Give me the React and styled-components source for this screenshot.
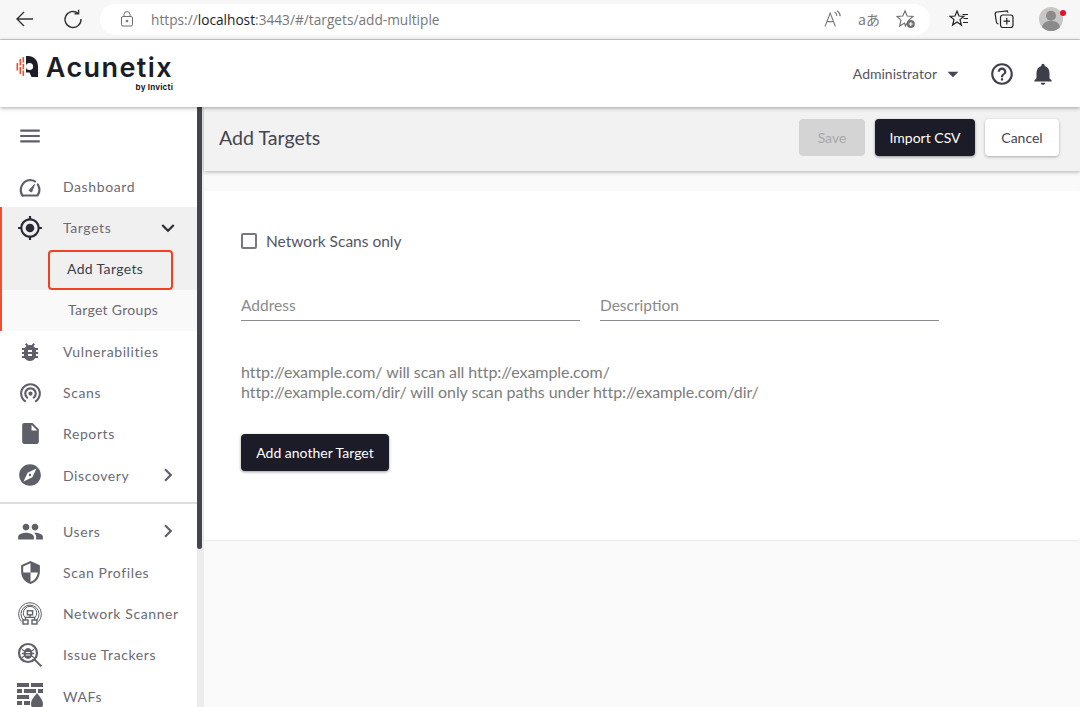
import styled, { createGlobalStyle } from "styled-components";
import {
  MdArrowDropDown,
  MdBugReport,
  MdExplore,
  MdGpsFixed,
  MdHelpOutline,
  MdInsertDriveFile,
  MdKeyboardArrowDown,
  MdKeyboardArrowRight,
  MdMenu,
  MdNotifications,
  MdPeople,
  MdSecurity,
  MdWifiTethering,
} from "react-icons/md";

const GlobalStyle = createGlobalStyle`
  html, body { margin: 0; padding: 0; height: 100%; }
  body { font-family: "Lato", "Noto Sans", sans-serif; background: #fff; overflow: hidden; }
  * { box-sizing: border-box; }
`;

const SpeedIcon = () => (
  <svg width="24" height="24" viewBox="0 0 24 24" fill="none" stroke="#5f5f69" strokeWidth="2.2">
    <path d="M4.5 20.5 A10 10 0 0 1 12 5 c2 0 3.6.5 5 1.4" strokeLinecap="round" />
    <path d="M19.8 9.5 A10 10 0 0 1 19.5 20.5 H4.5" strokeLinecap="round" />
    <path d="M11 15.5 L16.5 9.5 L13.6 17 Z" fill="#5f5f69" strokeWidth="1" />
  </svg>
);

const NetworkScannerIcon = () => (
  <svg width="24" height="24" viewBox="0 0 24 24" fill="none" stroke="#5f5f69">
    <path d="M3.4 19.6 A11.4 11.4 0 1 1 20.6 19.6" strokeWidth="1" />
    <path d="M5.2 18 A9 9 0 1 1 18.8 18" strokeWidth="1" />
    <path d="M7 15.5 A6.7 6.7 0 1 1 17 15.5" strokeWidth="1" />
    <rect x="9.4" y="8.8" width="5.2" height="4" fill="#fff" strokeWidth="1.4" />
    <rect x="5" y="18" width="5" height="4" fill="#fff" strokeWidth="1.4" />
    <rect x="14" y="18" width="5" height="4" fill="#fff" strokeWidth="1.4" />
    <path d="M12 12.8 V15.4 M7.5 18 V15.4 H16.5 V18" strokeWidth="1.4" />
  </svg>
);

const IssueTrackerIcon = () => (
  <svg width="26" height="26" viewBox="0 0 26 26" fill="none" stroke="#5f5f69">
    <circle cx="11" cy="11" r="9" strokeWidth="2.2" />
    <path d="M17.6 17.6 L24.4 24.4" strokeWidth="2" />
    <ellipse cx="11" cy="11.5" rx="4.4" ry="5.4" fill="#5f5f69" strokeWidth="0" />
    <path d="M5 7.5 L7.5 9 M17 7.5 L14.5 9 M4.8 11.5 H7 M17.2 11.5 H15 M5 15.5 L7.5 14 M17 15.5 L14.5 14" strokeWidth="1.3" />
    <path d="M8.8 10.5 H13.2 M8.8 13 H13.2" stroke="#fff" strokeWidth="1" />
  </svg>
);

const WafIcon = () => (
  <svg width="28" height="28" viewBox="0 0 28 28" fill="#5f5f69">
    <rect x="1" y="1" width="12" height="4" />
    <rect x="15" y="1" width="12" height="4" />
    <rect x="1" y="7" width="5" height="4" />
    <rect x="8" y="7" width="12" height="4" />
    <rect x="22" y="7" width="5" height="4" />
    <rect x="1" y="13" width="12" height="4" />
    <rect x="1" y="19" width="5" height="4" />
    <rect x="8" y="19" width="6" height="4" />
    <path d="M21 11 c3 4 6 7 6 11 a6 6 0 0 1-12 0 c0-4 3-7 6-11z" />
  </svg>
);

const BackIcon = () => (
  <svg width="20" height="20" viewBox="0 0 20 20" fill="none" stroke="#333" strokeWidth="1.4">
    <path d="M18 10 H2 M9 3 L2 10 L9 17" />
  </svg>
);

const ReloadIcon = () => (
  <svg width="20" height="20" viewBox="0 0 20 20" fill="none" stroke="#333" strokeWidth="1.4">
    <path d="M15 4.2 A8 8 0 1 0 18 10" />
    <path d="M15.6 .8 V4.8 H11.6" />
  </svg>
);

const LockIcon = () => (
  <svg width="14" height="16" viewBox="0 0 14 16" fill="none" stroke="#6f6f6f" strokeWidth="1">
    <rect x="1.5" y="5.5" width="11" height="9.5" rx="1.5" />
    <path d="M4 5.5 V3.6 a3 3 0 0 1 6 0 V5.5" />
    <circle cx="7" cy="10" r=".9" fill="#6f6f6f" />
  </svg>
);

const ReadAloudIcon = () => (
  <svg width="18" height="18" viewBox="0 0 18 18" fill="none" stroke="#7b7b7b" strokeWidth="1.1">
    <path d="M1 16.5 L6.2 3 L11.4 16.5 M3 11.6 H9.4" />
    <path d="M10.5 2 c1.6.8 2.4 2.2 2.4 4 M13 .8 c2 1.2 3.2 3 3.2 5.4" />
  </svg>
);

const StarAddIcon = () => (
  <svg width="20" height="20" viewBox="0 0 20 20" fill="none" stroke="#6f6f6f" strokeWidth="1.1">
    <path d="M9 1.8 L11.2 7 L17 7.4 L12.8 11 L9.4 17 L8.6 14 L3.6 17 L5 11.2 L1 7.4 L6.8 7 Z" />
    <circle cx="14.8" cy="15" r="4" fill="#6f6f6f" stroke="none" />
    <path d="M14.8 13 V17 M12.8 15 H16.8" stroke="#fff" />
  </svg>
);

const FavoritesIcon = () => (
  <svg width="20" height="20" viewBox="0 0 20 20" fill="none" stroke="#222" strokeWidth="1.2">
    <path d="M8 2 L10 7 L15 7.3 L11 10.6 L12.4 16 L8 13 L3.6 16 L5 10.6 L1 7.3 L6 7 Z" />
    <path d="M13.6 5.5 H19 M14.6 9.5 H19 M14 13.5 H19" />
  </svg>
);

const CollectionsIcon = () => (
  <svg width="20" height="20" viewBox="0 0 20 20" fill="none" stroke="#222" strokeWidth="1.2">
    <rect x="6.5" y="6" width="12.5" height="12.5" rx="2.5" />
    <path d="M14 3.6 L13.4 2 L3 3 C1.8 3.2 1 4.2 1.2 5.4 L2.4 13 C2.6 14 3.4 14.8 4.4 15" />
    <path d="M12.8 9 V15.5 M9.5 12.2 H16" />
  </svg>
);

const ProfileIcon = () => (
  <svg width="24" height="24" viewBox="0 0 24 24">
    <circle cx="12" cy="12" r="12" fill="#c9c7c5" />
    <circle cx="12" cy="8.8" r="5" fill="#8b8b8b" />
    <path d="M3 20 c1-5 5-6 9-6 s8 1 9 6 a12 12 0 0 1-18 0z" fill="#8b8b8b" />
  </svg>
);

const LogoMark = () => (
  <svg width="23" height="22" viewBox="0 0 23 22">
    <g fill="#f1502f">
      <rect x="0.5" y="7" width="1.6" height="7.5" />
      <rect x="3.5" y="3" width="1.6" height="6.5" />
      <rect x="3.5" y="11" width="1.6" height="7" />
      <rect x="6.5" y="1" width="1.6" height="5.5" />
      <rect x="6.5" y="8" width="1.6" height="5" />
      <rect x="6.5" y="14.5" width="1.6" height="5.5" />
    </g>
    <path d="M10 0 H12 C18 0 22 4.5 22 10.5 V21 H15.5 L13.5 16.5 H10 Z" fill="#1c1c28" />
    <circle cx="13.5" cy="10.5" r="3.6" fill="#fff" />
  </svg>
);

const navTop = [
  { label: "Vulnerabilities", icon: <MdBugReport size={24} /> },
  { label: "Scans", icon: <MdWifiTethering size={25} /> },
  { label: "Reports", icon: <MdInsertDriveFile size={25} /> },
  { label: "Discovery", icon: <MdExplore size={26} />, arrow: true },
];

const navBottom = [
  { label: "Users", icon: <MdPeople size={27} />, arrow: true },
  { label: "Scan Profiles", icon: <MdSecurity size={25} /> },
  { label: "Network Scanner", icon: <NetworkScannerIcon /> },
  { label: "Issue Trackers", icon: <IssueTrackerIcon /> },
  { label: "WAFs", icon: <WafIcon /> },
];

const NavRow = ({ item }) => (
  <NavItem>
    <NavIcon>{item.icon}</NavIcon>
    <NavLabel>{item.label}</NavLabel>
    {item.arrow && (
      <NavArrow>
        <MdKeyboardArrowRight size={26} />
      </NavArrow>
    )}
  </NavItem>
);

export default function App() {
  return (
    <>
      <GlobalStyle />
      <Page>
        <BrowserBar>
          <BackButton>
            <BackIcon />
          </BackButton>
          <BrowserButton>
            <ReloadIcon />
          </BrowserButton>
          <UrlPill>
            <LockIcon />
            <UrlText>
              https://<UrlHost>localhost</UrlHost>:3443/#/targets/add-multiple
            </UrlText>
            <UrlActions>
              <ReadAloudIcon />
              <TranslateGlyph>aあ</TranslateGlyph>
              <StarAddIcon />
            </UrlActions>
          </UrlPill>
          <BrowserTools>
            <FavoritesIcon />
            <CollectionsIcon />
            <ProfileWrap>
              <ProfileIcon />
              <ProfileDot />
            </ProfileWrap>
          </BrowserTools>
        </BrowserBar>

        <TopHeader>
          <Logo>
            <LogoRow>
              <LogoMark />
              <LogoName>Acunetix</LogoName>
            </LogoRow>
            <LogoBy>by Invicti</LogoBy>
          </Logo>
          <UserArea>
            <UserName>Administrator</UserName>
            <UserCaret>
              <MdArrowDropDown size={26} />
            </UserCaret>
            <HeaderIcon>
              <MdHelpOutline size={26} />
            </HeaderIcon>
            <HeaderIcon>
              <MdNotifications size={26} />
            </HeaderIcon>
          </UserArea>
        </TopHeader>

        <Main>
          <Sidebar>
            <MenuButton>
              <MdMenu size={26} />
            </MenuButton>
            <NavItem>
              <NavIcon>
                <SpeedIcon />
              </NavIcon>
              <NavLabel>Dashboard</NavLabel>
            </NavItem>
            <TargetsGroup>
              <ActiveBlock>
                <NavItem>
                  <NavIcon $dark>
                    <MdGpsFixed size={26} />
                  </NavIcon>
                  <NavLabel>Targets</NavLabel>
                  <NavArrow $dark>
                    <MdKeyboardArrowDown size={26} />
                  </NavArrow>
                </NavItem>
                <SubItem>
                  <HighlightBox>Add Targets</HighlightBox>
                </SubItem>
              </ActiveBlock>
              <SubItemMuted>Target Groups</SubItemMuted>
            </TargetsGroup>
            {navTop.map((item) => (
              <NavRow key={item.label} item={item} />
            ))}
            <NavDivider />
            {navBottom.map((item) => (
              <NavRow key={item.label} item={item} />
            ))}
          </Sidebar>
          <ScrollTrack>
            <ScrollThumb />
          </ScrollTrack>

          <Content>
            <PageHeader>
              <PageTitle>Add Targets</PageTitle>
              <HeaderButtons>
                <SaveButton disabled>Save</SaveButton>
                <ImportButton>Import CSV</ImportButton>
                <CancelButton>Cancel</CancelButton>
              </HeaderButtons>
            </PageHeader>
            <ContentBody>
              <Card>
                <CheckRow>
                  <CheckBox />
                  <CheckLabel>Network Scans only</CheckLabel>
                </CheckRow>
                <Fields>
                  <Field>Address</Field>
                  <Field>Description</Field>
                </Fields>
                <HelpText>
                  http://example.com/ will scan all http://example.com/
                  <br />
                  http://example.com/dir/ will only scan paths under http://example.com/dir/
                </HelpText>
                <AddButton>Add another Target</AddButton>
              </Card>
            </ContentBody>
          </Content>
        </Main>
      </Page>
    </>
  );
}

const Page = styled.div`
  height: 100vh;
  display: flex;
  flex-direction: column;
  overflow: hidden;
`;

const BrowserBar = styled.div`
  height: 40px;
  flex: none;
  display: flex;
  align-items: center;
  background: #f7f7f7;
  border-bottom: 1px solid #cfcfcf;
  padding: 0 17px 1px 0;
`;

const BrowserButton = styled.div`
  width: 46px;
  height: 32px;
  display: flex;
  align-items: center;
  justify-content: center;
`;

const BackButton = styled(BrowserButton)`
  width: 50px;
`;

const UrlPill = styled.div`
  width: 830px;
  height: 31px;
  margin-left: 4px;
  display: flex;
  align-items: center;
  padding: 0 14px 0 20px;
  background: #fff;
  border-radius: 16px;
`;

const UrlText = styled.div`
  margin-left: 17px;
  font: 13.7px "Open Sans", sans-serif;
  color: #777;
  white-space: nowrap;
`;

const UrlHost = styled.span`
  color: #222;
`;

const UrlActions = styled.div`
  margin-left: auto;
  display: flex;
  align-items: center;
  gap: 16px;
`;

const TranslateGlyph = styled.span`
  font: 14px "Noto Sans CJK JP", sans-serif;
  color: #7b7b7b;
`;

const BrowserTools = styled.div`
  margin-left: auto;
  display: flex;
  align-items: center;
  gap: 25px;
`;

const ProfileWrap = styled.div`
  position: relative;
  display: flex;
`;

const ProfileDot = styled.span`
  position: absolute;
  top: 3px;
  right: -3px;
  width: 6px;
  height: 6px;
  border-radius: 50%;
  background: #e81123;
`;

const TopHeader = styled.header`
  position: relative;
  z-index: 3;
  height: 67px;
  flex: none;
  display: flex;
  align-items: center;
  justify-content: space-between;
  padding: 0 24px 0 17px;
  background: #fff;
  box-shadow: 0 1px 4px rgba(0, 0, 0, 0.35);
`;

const Logo = styled.div`
  display: flex;
  flex-direction: column;
  align-items: flex-end;
  width: 156px;
  margin-top: -3px;
`;

const LogoRow = styled.div`
  display: flex;
  align-items: center;
  gap: 7px;
  height: 30px;
`;

const LogoName = styled.span`
  font: 600 27px "Inter", sans-serif;
  letter-spacing: 1.4px;
  color: #1c1c28;
`;

const LogoBy = styled.span`
  font: 700 8px "Inter", sans-serif;
  letter-spacing: 0.2px;
  color: #1c1c28;
`;

const UserArea = styled.div`
  display: flex;
  align-items: center;
`;

const UserName = styled.span`
  font-size: 14px;
  color: #55555f;
`;

const UserCaret = styled.span`
  display: flex;
  margin: 0 8px 0 3px;
  color: #45454f;
`;

const HeaderIcon = styled.span`
  display: flex;
  margin-left: 15px;
  color: #3e3e4a;
`;

const Main = styled.div`
  flex: 1;
  min-height: 0;
  display: flex;
`;

const Sidebar = styled.nav`
  width: 197px;
  flex: none;
  background: #fff;
  overflow: hidden;
`;

const MenuButton = styled.div`
  height: 59px;
  padding: 0 0 2px 17px;
  display: flex;
  align-items: center;
  color: #5f5f69;
`;

const NavItem = styled.div`
  height: 41.2px;
  display: flex;
  align-items: center;
  padding: 0 16px 0 16px;
`;

const NavIcon = styled.span`
  width: 28px;
  height: 28px;
  flex: none;
  display: flex;
  align-items: center;
  justify-content: center;
  color: ${(p) => (p.$dark ? "#2a2a35" : "#5f5f69")};
`;

const NavLabel = styled.span`
  margin-left: 19px;
  font-size: 14px;
  letter-spacing: 0.6px;
  color: #6b6b75;
  white-space: nowrap;
`;

const NavArrow = styled.span`
  margin-left: auto;
  display: flex;
  color: ${(p) => (p.$dark ? "#2a2a35" : "#5f5f69")};
`;

const TargetsGroup = styled.div`
  border-left: 2px solid #f1502f;
`;

const ActiveBlock = styled.div`
  background: #f0f0f0;

  ${NavItem} {
    padding-left: 14px;
    padding-right: 16px;
  }
`;

const SubItem = styled.div`
  height: 41.6px;
  padding-left: 46px;
  display: flex;
  align-items: flex-end;
`;

const HighlightBox = styled.div`
  width: 125px;
  height: 40px;
  padding: 0 0 2px 17px;
  display: flex;
  align-items: center;
  border: 2px solid #f1411f;
  border-radius: 4px;
  font-size: 14px;
  letter-spacing: 0.35px;
  color: #3e3e4a;
`;

const SubItemMuted = styled.div`
  height: 41px;
  padding: 0 0 2px 66px;
  display: flex;
  align-items: center;
  background: #f9f9f9;
  font-size: 14px;
  letter-spacing: 0.3px;
  color: #6b6b75;
`;

const NavDivider = styled.div`
  height: 2px;
  margin: 6px 0 7px;
  background: #dedede;
`;

const ScrollTrack = styled.div`
  width: 7px;
  flex: none;
  background: #ececec;
`;

const ScrollThumb = styled.div`
  width: 5px;
  height: 442px;
  background: #45454f;
  border-radius: 0 0 3px 3px;
`;

const Content = styled.main`
  flex: 1;
  min-width: 0;
  display: flex;
  flex-direction: column;
  background: #fafafa;
`;

const PageHeader = styled.div`
  position: relative;
  z-index: 2;
  height: 64px;
  flex: none;
  display: flex;
  align-items: center;
  justify-content: space-between;
  padding: 0 21px 3px 15px;
  background: #f2f2f2;
  box-shadow: 0 1px 4px rgba(0, 0, 0, 0.3);
`;

const PageTitle = styled.h1`
  margin: 0;
  font-size: 19.6px;
  font-weight: 400;
  color: #45454f;
`;

const HeaderButtons = styled.div`
  display: flex;
  gap: 10px;
`;

const BaseButton = styled.button`
  height: 37px;
  padding: 0;
  border: 0;
  border-radius: 4px;
  font-family: inherit;
  font-size: 14px;
  white-space: nowrap;
`;

const DarkButton = styled(BaseButton)`
  background: #1c1c28;
  color: #fff;
  box-shadow: 0 1px 3px rgba(0, 0, 0, 0.4);
`;

const ImportButton = styled(DarkButton)`
  width: 100px;
`;

const AddButton = styled(DarkButton)`
  width: 148px;
`;

const CancelButton = styled(BaseButton)`
  width: 74px;
  background: #fff;
  color: #45454f;
  box-shadow: 0 1px 3px rgba(0, 0, 0, 0.3);
`;

const SaveButton = styled(BaseButton)`
  width: 66px;
  background: #d4d4d4;
  color: #a8a8a8;
`;

const ContentBody = styled.div`
  flex: 1;
  padding-top: 20px;
`;

const Card = styled.section`
  height: 349px;
  padding: 42px 37px 0;
  background: #fff;
  box-shadow: 0 1px 2px rgba(0, 0, 0, 0.07);
  border-radius: 2px;
`;

const CheckRow = styled.div`
  display: flex;
  align-items: center;
  height: 16px;
  gap: 9px;
`;

const CheckBox = styled.span`
  width: 16px;
  height: 16px;
  border: 2px solid #77777f;
  border-radius: 2px;
`;

const CheckLabel = styled.span`
  font-size: 15.5px;
  color: #55555f;
`;

const Fields = styled.div`
  display: flex;
  gap: 20px;
  margin-top: 38px;
`;

const Field = styled.div`
  width: 339px;
  height: 34px;
  padding-top: 9px;
  border-bottom: 1px solid #8a8a92;
  font-size: 15.5px;
  color: #8a8a8a;
`;

const HelpText = styled.p`
  margin: 41px 0 32px;
  font-size: 16px;
  line-height: 20px;
  letter-spacing: -0.07px;
  color: #7c7c7c;
`;
